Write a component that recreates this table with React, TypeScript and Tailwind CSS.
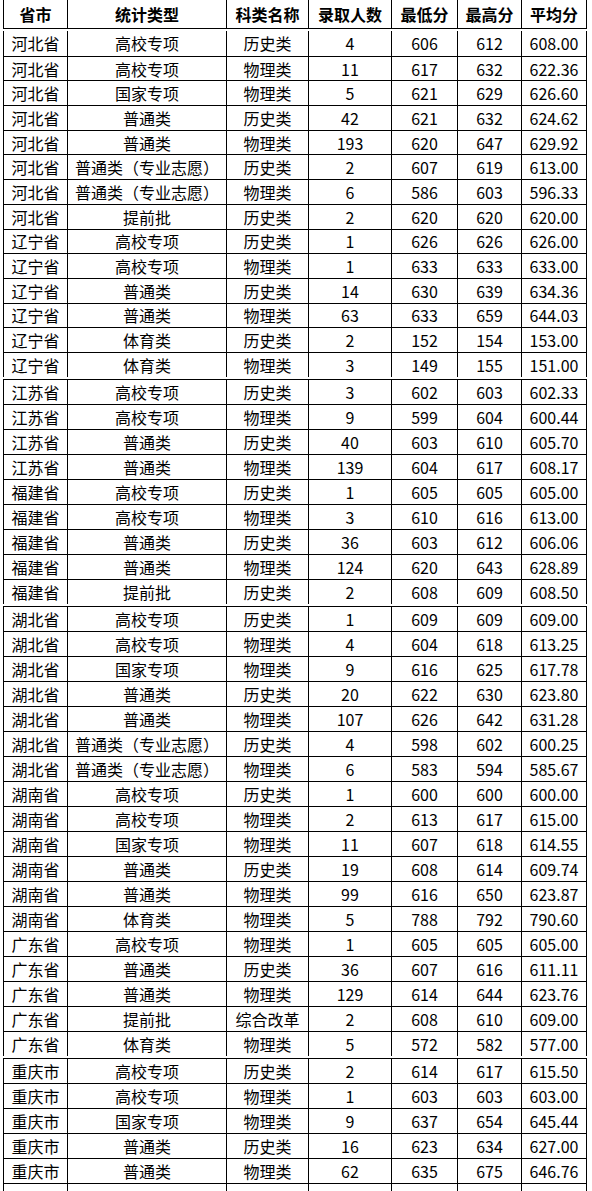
import React from "react";

type Row = [string, string, string, string, string, string, string];

const segA: Row[] = [
  ["河北省", "高校专项", "历史类", "4", "606", "612", "608.00"],
  ["河北省", "高校专项", "物理类", "11", "617", "632", "622.36"],
  ["河北省", "国家专项", "物理类", "5", "621", "629", "626.60"],
  ["河北省", "普通类", "历史类", "42", "621", "632", "624.62"],
  ["河北省", "普通类", "物理类", "193", "620", "647", "629.92"],
  ["河北省", "普通类（专业志愿）", "历史类", "2", "607", "619", "613.00"],
  ["河北省", "普通类（专业志愿）", "物理类", "6", "586", "603", "596.33"],
  ["河北省", "提前批", "历史类", "2", "620", "620", "620.00"],
  ["辽宁省", "高校专项", "历史类", "1", "626", "626", "626.00"],
  ["辽宁省", "高校专项", "物理类", "1", "633", "633", "633.00"],
  ["辽宁省", "普通类", "历史类", "14", "630", "639", "634.36"],
  ["辽宁省", "普通类", "物理类", "63", "633", "659", "644.03"],
  ["辽宁省", "体育类", "历史类", "2", "152", "154", "153.00"],
  ["辽宁省", "体育类", "物理类", "3", "149", "155", "151.00"],
];

const segB: Row[] = [
  ["江苏省", "高校专项", "历史类", "3", "602", "603", "602.33"],
  ["江苏省", "高校专项", "物理类", "9", "599", "604", "600.44"],
  ["江苏省", "普通类", "历史类", "40", "603", "610", "605.70"],
  ["江苏省", "普通类", "物理类", "139", "604", "617", "608.17"],
  ["福建省", "高校专项", "历史类", "1", "605", "605", "605.00"],
  ["福建省", "高校专项", "物理类", "3", "610", "616", "613.00"],
  ["福建省", "普通类", "历史类", "36", "603", "612", "606.06"],
  ["福建省", "普通类", "物理类", "124", "620", "643", "628.89"],
  ["福建省", "提前批", "历史类", "2", "608", "609", "608.50"],
];

const segC: Row[] = [
  ["湖北省", "高校专项", "历史类", "1", "609", "609", "609.00"],
  ["湖北省", "高校专项", "物理类", "4", "604", "618", "613.25"],
  ["湖北省", "国家专项", "物理类", "9", "616", "625", "617.78"],
  ["湖北省", "普通类", "历史类", "20", "622", "630", "623.80"],
  ["湖北省", "普通类", "物理类", "107", "626", "642", "631.28"],
  ["湖北省", "普通类（专业志愿）", "历史类", "4", "598", "602", "600.25"],
  ["湖北省", "普通类（专业志愿）", "物理类", "6", "583", "594", "585.67"],
  ["湖南省", "高校专项", "历史类", "1", "600", "600", "600.00"],
  ["湖南省", "高校专项", "物理类", "2", "613", "617", "615.00"],
  ["湖南省", "国家专项", "物理类", "11", "607", "618", "614.55"],
  ["湖南省", "普通类", "历史类", "19", "608", "614", "609.74"],
  ["湖南省", "普通类", "物理类", "99", "616", "650", "623.87"],
  ["湖南省", "体育类", "物理类", "5", "788", "792", "790.60"],
  ["广东省", "高校专项", "物理类", "1", "605", "605", "605.00"],
  ["广东省", "普通类", "历史类", "36", "607", "616", "611.11"],
  ["广东省", "普通类", "物理类", "129", "614", "644", "623.76"],
  ["广东省", "提前批", "综合改革", "2", "608", "610", "609.00"],
  ["广东省", "体育类", "物理类", "5", "572", "582", "577.00"],
];

const segD: Row[] = [
  ["重庆市", "高校专项", "历史类", "2", "614", "617", "615.50"],
  ["重庆市", "高校专项", "物理类", "1", "603", "603", "603.00"],
  ["重庆市", "国家专项", "物理类", "9", "637", "654", "645.44"],
  ["重庆市", "普通类", "历史类", "16", "623", "634", "627.00"],
  ["重庆市", "普通类", "物理类", "62", "635", "675", "646.76"],
];

const header: Row = ["省市", "统计类型", "科类名称", "录取人数", "最低分", "最高分", "平均分"];

const GRID = "grid grid-cols-[64px_159px_82px_83px_66px_64px_65px] border-r border-black";

function Cells({ row, bold }: { row: string[]; bold?: boolean }) {
  return (
    <>
      {row.map((c, i) => (
        <div
          key={i}
          className={`flex items-center justify-center border-l border-black leading-none whitespace-nowrap ${bold ? "font-bold" : ""}`}
        >
          {c}
        </div>
      ))}
    </>
  );
}

function Segment({ rows, first, last }: { rows: Row[]; first?: boolean; last?: boolean }) {
  return (
    <div className={last ? "border-b border-black" : ""}>
      {rows.map((r, i) => (
        <div
          key={i}
          className={`${GRID} ${first ? "h-[24.7px]" : "h-[25px]"} ${first && i === 0 ? "" : "border-t"}`}
        >
          <Cells row={r} />
        </div>
      ))}
    </div>
  );
}

export default function App() {
  return (
    <div className="w-[592px] h-[1191px] bg-white overflow-hidden font-['Noto_Sans_CJK_SC','Noto_Sans',sans-serif] text-[16px] text-black">
      <div className="ml-[3px] w-[584px]">
        <div className={`${GRID} h-[29px] border-b`}>
          <Cells row={header} bold />
        </div>
        <div className="h-[2px]" />
        <Segment rows={segA} first />
        <div className="h-[2px]" />
        <Segment rows={segB} />
        <div className="h-[2px]" />
        <Segment rows={segC} />
        <div className="h-[2px]" />
        <Segment rows={segD} last />
        <div className={`${GRID} h-[8px]`}>
          <Cells row={["", "", "", "", "", "", ""]} />
        </div>
      </div>
    </div>
  );
}
